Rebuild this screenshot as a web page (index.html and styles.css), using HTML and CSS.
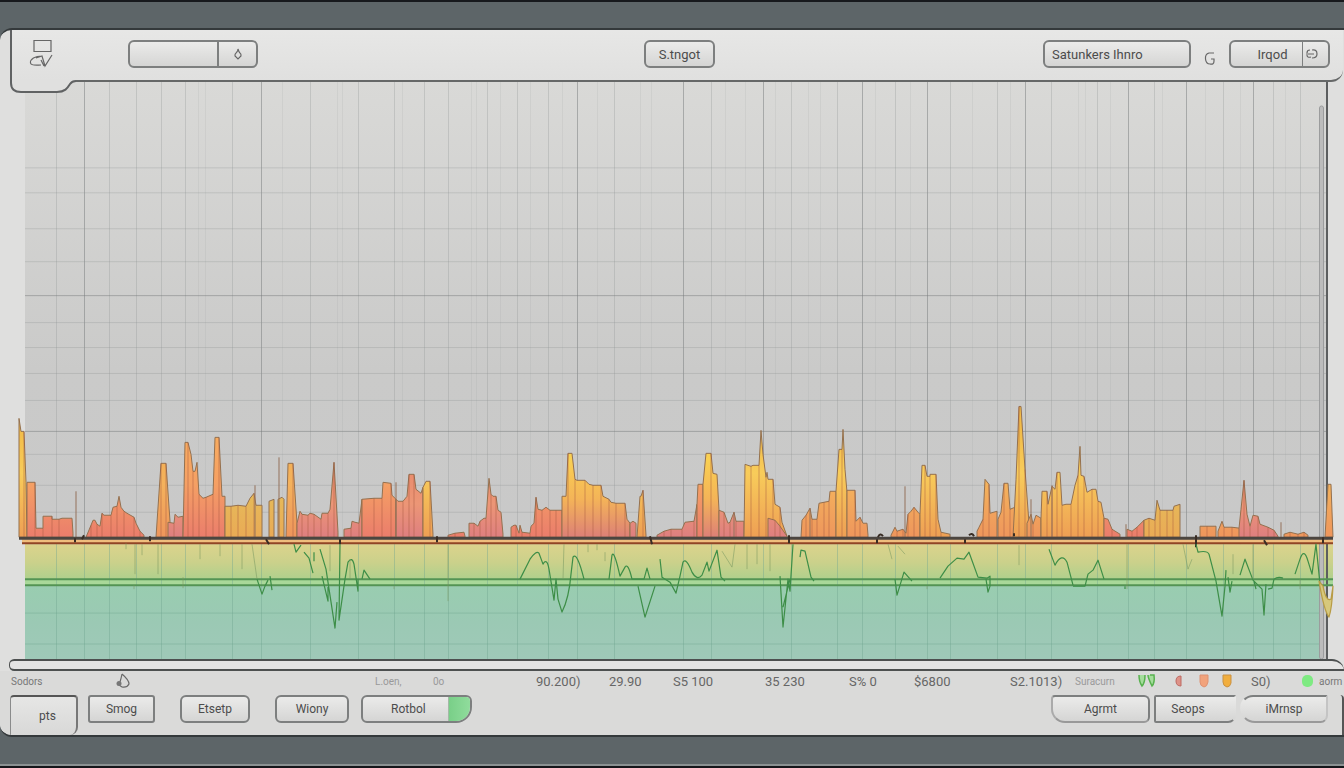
FILE: index.html
```html
<!DOCTYPE html>
<html lang="en">
<head>
    <meta charset="UTF-8">
    <title>Signal Monitor</title>
    <link rel="stylesheet" href="styles.css">
</head>
<body>
<div class="window">
    <header class="toolbar">
        <svg class="toolbar-tab" width="66" height="66" viewBox="0 0 66 66">
            <path class="tab-fill" d="M1 49V54Q1 62 11 62H47C56 62 58 57 60 54Q62 51 66 51V49Z"/>
            <path class="tab-line" d="M1 0V53Q1 62 11 62H47C56 62 58 57 60 54Q62 51 66 51"/>
        </svg>
        <div class="toolbar-left">
            <svg class="logo" width="26" height="32" viewBox="0 0 26 32">
                <path d="M5 2.500H22V13.500H5Z"/>
                <path d="M13 18C6 18 1 21 1.500 25Q2 28 12 27M7 20L13 18L16 28L23 17M12 22L15 28M4 27H12"/>
            </svg>
            <div class="split search">
                <input type="text" aria-label="Search">
                <button aria-label="Marker">
                    <svg width="10" height="12" viewBox="0 0 10 12"><path d="M5 1Q5 3 3.500 4.500Q1.500 6 2 8Q3 9 5 11Q7 9 8 8Q8.500 6 6.500 4.500Q5.500 3 5 1Z"/></svg>
                </button>
            </div>
        </div>
        <button class="box center-button">S.tngot</button>
        <div class="toolbar-right">
            <select class="box source" aria-label="Source">
                <option>Satunkers Ihnro</option>
            </select>
            <button class="icon-button" aria-label="Reload">
                <svg width="12" height="14" viewBox="0 0 12 14"><path d="M10 1H5Q1 2 1.500 7Q2 12 6 12Q10 13 10 9V7H7"/></svg>
            </button>
            <div class="split export">
                <button>Irqod</button>
                <button aria-label="More">
                    <svg width="14" height="10" viewBox="0 0 14 10"><path d="M5 1Q2 1 2 4M1 5H9M2 6Q2 9 6 8M7 1Q12 0 12 5Q12 9 7 9"/></svg>
                </button>
            </div>
        </div>
    </header>

    <svg class="chart" viewBox="0 82 1344 578" preserveAspectRatio="none" role="img" aria-label="Signal chart">
        <defs>
            <linearGradient id="plot" x1="0" y1="0" x2="0" y2="1"><stop offset="0" stop-color="#d9d9d7"/><stop offset="0.5" stop-color="#cacac9"/><stop offset="1" stop-color="#c8c8c8"/></linearGradient>
            <linearGradient id="gold" gradientUnits="userSpaceOnUse" x1="0" y1="430" x2="0" y2="539"><stop offset="0" stop-color="#f2bc48"/><stop offset="0.4" stop-color="#f8cc5a"/><stop offset="1" stop-color="#ee9e54"/></linearGradient>
            <linearGradient id="amber" gradientUnits="userSpaceOnUse" x1="0" y1="430" x2="0" y2="539"><stop offset="0" stop-color="#f4ae4e"/><stop offset="0.5" stop-color="#f4b25c"/><stop offset="1" stop-color="#ee955c"/></linearGradient>
            <linearGradient id="coral" gradientUnits="userSpaceOnUse" x1="0" y1="430" x2="0" y2="539"><stop offset="0" stop-color="#f9ae5e"/><stop offset="0.5" stop-color="#f5a064"/><stop offset="1" stop-color="#ea7c6c"/></linearGradient>
            <linearGradient id="rose" gradientUnits="userSpaceOnUse" x1="0" y1="470" x2="0" y2="539"><stop offset="0" stop-color="#ea8c6c"/><stop offset="0.5" stop-color="#ec9676"/><stop offset="1" stop-color="#de7e80"/></linearGradient>
            <linearGradient id="sunset" gradientUnits="userSpaceOnUse" x1="0" y1="460" x2="0" y2="539"><stop offset="0" stop-color="#fad052"/><stop offset="0.5" stop-color="#f4b458"/><stop offset="1" stop-color="#dc7e78"/></linearGradient>
            <linearGradient id="straw" gradientUnits="userSpaceOnUse" x1="0" y1="490" x2="0" y2="539"><stop offset="0" stop-color="#e5bc5a"/><stop offset="1" stop-color="#eaaa55"/></linearGradient>
            <linearGradient id="lime" x1="0" y1="0" x2="0" y2="1"><stop offset="0" stop-color="#dcd38c"/><stop offset="0.5" stop-color="#cbd18b"/><stop offset="1" stop-color="#aed08d"/></linearGradient>
            <linearGradient id="teal" x1="0" y1="0" x2="0" y2="1"><stop offset="0" stop-color="#99cdb0"/><stop offset="0.5" stop-color="#9bc9b4"/><stop offset="1" stop-color="#9fc9b8"/></linearGradient>
        </defs>
        <rect x="25" y="82" width="1301" height="578" fill="url(#plot)"/>
        <rect x="25" y="545" width="1308" height="36" fill="url(#lime)"/>
        <rect x="25" y="580" width="1308" height="7" fill="#a9d899"/>
        <rect x="25" y="587" width="1295" height="73" fill="url(#teal)"/>
        <g id="grid"></g>
        <rect class="scroll-thumb" x="1319.500" y="106" width="4" height="554" rx="2"/>
        <path class="edge" d="M1327 82V660"/>
        <g id="bars"></g>
        <rect x="22" y="540" width="1311" height="4" fill="#f0bd7d"/>
        <path class="axis" d="M19 539H1333"/>
        <path class="axis-red" d="M22 544H1333"/>
        <path class="ticks" d="M75 539V543M82 540L84 536M150 537V542M266 540L269 545M340 540V545M437 537V543M650 537L652 545M789 536V544M877 540V544M965 540V544M1196 536V548M1264 541L1267 546M1323 538V544M878 538Q880 533 883 537M969 536Q972 533 974 537M1014 537V534"/>
        <path class="band-line" d="M25 580H1333M25 586H1333"/>
        <g id="traces"></g>
    </svg>

    <div class="slider-track"></div>

    <footer class="panel">
        <div class="readout">
            <span class="small">Sodors</span>
            <svg width="16" height="16" viewBox="0 0 16 16"><path d="M7 1Q6 6 5 9M7 1Q14 7 14 11Q12 15 7 14L4 12" fill="none" stroke="#6a6a6a" stroke-width="1.200"/><circle cx="4" cy="10.500" r="2.500" fill="#777"/></svg>
            <span class="small faint">L.oen,</span>
            <span class="small faint">0o</span>
            <span>90.200)</span>
            <span>29.90</span>
            <span>S5 100</span>
            <span>35 230</span>
            <span>S% 0</span>
            <span>$6800</span>
            <span>S2.1013)</span>
            <span class="small faint">Suracurn</span>
            <svg width="18" height="14" viewBox="0 0 18 14"><path d="M1 1Q1 8 4 12Q7 9 7 1M10 1Q10 4 14 12Q17 9 16 1L12 1" fill="#a5dd9c" stroke="#58b14f" stroke-width="1.500"/></svg>
            <svg width="8" height="14" viewBox="0 0 8 14"><path d="M6 2V12Q1 12 1 7Q1 2 6 2Z" fill="#de9288" stroke="#bd6a62"/></svg>
            <svg width="10" height="14" viewBox="0 0 10 14"><path d="M1 1H9V8Q8 13 5 13Q1 12 1 8Z" fill="#f2a37c" stroke="#de9273"/></svg>
            <svg width="10" height="14" viewBox="0 0 10 14"><path d="M1 1H9V9Q8 13 5 13Q1 12 1 8Z" fill="#f1ae3e" stroke="#c99142"/></svg>
            <span>S0)</span>
            <svg width="13" height="14" viewBox="0 0 13 14"><rect x="1" y="1" width="11" height="12" rx="5" fill="#7eea82"/></svg>
            <span class="small">aorm</span>
        </div>
        <div class="actions">
            <div class="group tabs">
                <button class="tab">pts</button>
                <button class="box square">Smog</button>
            </div>
            <div class="group modes">
                <button class="box">Etsetp</button>
                <button class="box">Wiony</button>
            </div>
            <button class="box record">Rotbol<span class="record-light"></span></button>
            <div class="group ends">
                <button class="box format">Agrmt</button>
                <button class="box stops">Seops</button>
                <button class="box merge">iMrnsp</button>
            </div>
        </div>
    </footer>
</div>
<script src="chart.js"></script>
</body>
</html>
```
FILE: styles.css
```css
* {
    box-sizing: border-box;
}
body {
    margin: 0;
    height: 100vh;
    min-height: 480px;
    padding: 26px 0 29px;
    display: flex;
    flex-direction: column;
    overflow: hidden;
    background: #5d6568;
    border-top: 2px solid #17191d;
    border-bottom: 2px solid #15161a;
    box-shadow: inset 0 -2px 0 #8b9192;
    color: #4c4c4c;
    font-family: Roboto, "Liberation Sans", sans-serif;
    font-size: 13px;
}
button, input, select {
    font: inherit;
    color: inherit;
    margin: 0;
    padding: 0;
}
svg {
    display: block;
}
.window {
    flex: 1;
    min-height: 0;
    display: flex;
    flex-direction: column;
    background: #dfdfde;
    border-top: 2px solid #34393b;
    border-bottom: 2px solid #34393b;
    border-radius: 12px 0 0 12px;
}

/* toolbar */
.toolbar {
    position: relative;
    display: grid;
    grid-template-columns: 1fr auto 1fr;
    align-items: center;
    height: 52px;
    margin: 0 1px 0 10px;
    padding: 0 13px 2px 19px;
    background: linear-gradient(#e7e7e6, #e0e0df);
    border-bottom: 2px solid #666868;
    border-bottom-right-radius: 12px;
}
.toolbar-tab {
    position: absolute;
    left: 0;
    top: 0;
}
.tab-fill {
    fill: #e0e0df;
}
.tab-line {
    fill: none;
    stroke: #606263;
    stroke-width: 2;
}
.toolbar-left, .toolbar-right {
    position: relative;
    display: flex;
    align-items: center;
}
.toolbar-left {
    gap: 73px;
}
.toolbar-right {
    justify-content: flex-end;
    gap: 13px;
}
.logo path, .split path, .icon-button path {
    fill: none;
    stroke: #666;
    stroke-width: 1.2;
}
.box, .split {
    height: 28px;
    background: linear-gradient(#ebebea, #d5d5d4);
    border: 2px solid #7d7f7f;
    border-radius: 6px;
}
.split {
    display: flex;
    overflow: hidden;
}
.split input, .split button, .icon-button {
    border: 0;
    background: none;
}
.split button {
    display: flex;
    align-items: center;
    justify-content: center;
}
.split > :last-child {
    border-left: 2px solid #7d7f7f;
}
.search {
    width: 130px;
}
.search input {
    flex: 1;
    min-width: 0;
    padding: 0 8px;
}
.search button {
    width: 39px;
}
.center-button {
    width: 71px;
}
.source {
    width: 148px;
    padding: 0 7px;
    appearance: none;
}
.export {
    width: 101px;
}
.export button {
    width: 26px;
}
.export button:first-child {
    flex: 1;
    padding-left: 12px;
}
.export > :last-child {
    border-left-width: 1px;
    padding-right: 8px;
}
.icon-button {
    padding-top: 10px;
}

/* chart */
.chart {
    flex: 1;
    width: 100%;
    min-height: 0;
}
.grid-line {
    stroke: #8f9494;
    stroke-width: 1;
    opacity: 0.3;
}
.grid-line.major {
    stroke: #777b7c;
    opacity: 0.5;
}
.grid-line.minor {
    opacity: 0.12;
}
.grid-line.low {
    stroke: #6fa590;
    opacity: 0.4;
}
.bar-shape {
    stroke: #94704f;
    stroke-width: 1;
    stroke-linejoin: round;
}
.bar-split {
    stroke: #a3553f;
    stroke-width: 1;
    opacity: 0.45;
}
.spike {
    fill: none;
    stroke: #94715b;
    stroke-width: 1;
}
.axis {
    stroke: #4b4540;
    stroke-width: 3;
}
.axis-red {
    stroke: #914526;
    stroke-width: 2;
}
.ticks {
    fill: none;
    stroke: #392d25;
    stroke-width: 2;
}
.band-line {
    stroke: #549454;
    stroke-width: 2;
}
.trace {
    fill: none;
    stroke: #3d8e47;
    stroke-width: 1.2;
    stroke-linejoin: round;
}
.trace.soft {
    stroke: #799962;
    stroke-width: 1;
    opacity: 0.55;
}
.trace.tail {
    fill: #d7c87c;
    stroke: #b89c45;
}
.edge {
    stroke: #5c5e5f;
    stroke-width: 2;
}
.scroll-thumb {
    fill: #bcbcbc;
    stroke: #9b9c9d;
}
.slider-track {
    height: 12px;
    margin-left: 9px;
    background: #e4e4e4;
    border: solid #4d5050;
    border-width: 2px 0 2px 1px;
    border-radius: 6px 14px 0 6px;
}

/* bottom panel */
.panel {
    height: 64px;
    background: #dadad9;
    border-radius: 0 0 0 12px;
    overflow: hidden;
}
.readout {
    display: grid;
    grid-template-columns:
        minmax(0, 104fr) minmax(0, 260fr) minmax(0, 58fr) minmax(0, 103fr)
        minmax(0, 73fr) minmax(0, 64fr) minmax(0, 92fr) minmax(0, 84fr)
        minmax(0, 65fr) minmax(0, 96fr) minmax(0, 65fr) minmax(0, 63fr)
        minmax(0, 37fr) minmax(0, 24fr) minmax(0, 23fr) minmax(0, 29fr)
        minmax(0, 50fr) minmax(0, 18fr) minmax(0, 25fr);
    align-items: center;
    height: 24px;
    padding: 0 0 4px 11px;
    white-space: nowrap;
    color: #666;
}
.readout .small {
    font-size: 10px;
    color: #777;
}
.readout .faint {
    color: #999;
}
.actions {
    display: flex;
    align-items: flex-start;
    padding-left: 10px;
    font-size: 12px;
}
.group {
    display: flex;
}
.tabs {
    gap: 10px;
}
.modes {
    gap: 25px;
    margin: 0 12px 0 25px;
}
.actions .box {
    width: 70px;
}
.actions .square {
    width: 67px;
    border-radius: 3px;
}
.tab {
    width: 68px;
    height: 40px;
    background: linear-gradient(#e6e6e5, #d8d8d7);
    border: 1px solid #8a8b8b;
    border-top: 2px solid #555;
    border-right: 2px solid #777;
    border-bottom: 0;
    border-radius: 4px 4px 8px 0;
    padding-left: 8px;
}
.modes .box:last-child {
    width: 74px;
}
.actions .record {
    display: flex;
    align-items: center;
    justify-content: space-between;
    width: 111px;
    padding-left: 28px;
    border-radius: 6px 6px 16px 6px;
    overflow: hidden;
}
.record-light {
    width: 22px;
    height: 24px;
    background: linear-gradient(90deg, #79cf88, #90dc9c);
    border-left: 1px solid #a5b8a7;
}
.ends {
    flex: 1;
    justify-content: flex-end;
    gap: 4px;
    height: 40px;
    padding-right: 14px;
    border-right: 2px solid #555;
    border-top-right-radius: 4px;
}
.actions .format {
    width: 99px;
    border-radius: 4px 6px 6px 14px;
    border-left-color: #aaa;
    border-bottom-color: #999;
}
.actions .stops {
    width: 82px;
    padding-right: 14px;
    border-radius: 2px 0 8px 2px;
    border-right-color: transparent;
}
.actions .merge {
    width: 88px;
    border-radius: 14px 2px 8px 16px;
    border-left-color: transparent;
    border-right-color: #c4c4c4;
    border-bottom-color: #999;
}
```
FILE: chart.js
```js
const SVG_NS = 'http://www.w3.org/2000/svg';
const BASE = 538;

function add(parent, tag, attrs) {
    const el = document.createElementNS(SVG_NS, tag);
    for (const key in attrs) {
        el.setAttribute(key, attrs[key]);
    }
    document.getElementById(parent).appendChild(el);
}

// grid
const columns = [56, 109, 136, 161, 185, 232, 310, 358, 394, 424, 448, 487, 517, 548, 614, 711, 791, 837, 895, 950, 997, 1051, 1097, 1154, 1223, 1273, 1300];
const majorColumns = [84, 261, 577, 683, 763, 862, 927, 1025, 1128, 1186, 1253];
const minorColumns = [198, 205, 282, 337, 342, 402, 471, 476, 500, 530, 562, 597, 640, 651, 725, 745, 775, 808, 820, 875, 910, 972, 1010, 1078, 1085, 1110, 1162, 1205, 1240, 1285];
const rows = [168, 193, 229, 262, 323, 348, 374, 401, 455, 486, 513];
const majorRows = [296, 432];
const lowRows = [614, 645];

columns.forEach(x => add('grid', 'path', {d: `M${x}.5 82V545`, class: 'grid-line'}));
majorColumns.forEach(x => add('grid', 'path', {d: `M${x}.5 82V545`, class: 'grid-line major'}));
minorColumns.forEach(x => add('grid', 'path', {d: `M${x}.5 82V545`, class: 'grid-line minor'}));
columns.concat(majorColumns).forEach(x => add('grid', 'path', {d: `M${x}.5 545V660`, class: 'grid-line low'}));
rows.forEach(y => add('grid', 'path', {d: `M25 ${y}H1326`, class: 'grid-line'}));
majorRows.forEach(y => add('grid', 'path', {d: `M25 ${y}H1326`, class: 'grid-line major'}));
lowRows.forEach(y => add('grid', 'path', {d: `M25 ${y}H1320`, class: 'grid-line low'}));

// bar outlines, one run per colour
const runs = [
    ['gold', '19,419 21,432 24,432 26,483 27,538'],
    ['coral', '27,483 35,483 36,529 43,529 43,517 52,517 52,520 59,520 62,519 72,519 73,534'],
    ['coral', '86,538 91,526 93,521 95,521 97,525 100,527 102,514 104,516 111,516 113,508 117,507 119,497 121,508 124,512 127,514 134,518 136,524 140,532 144,536'],
    ['amber', '156,538 161,464 166,464 170,522 171,538'],
    ['rose', '168,523 174,524 175,515 178,518 183,517'],
    ['coral', '183,538 185,443 188,443 191,455 193,472 195,472 197,463 199,495 203,499 206,498 213,495 215,438 219,438 222,497 225,497'],
    ['straw', '225,507 231,507 238,506 246,507 250,499 254,494 256,506 262,506'],
    ['straw', '269,502 274,500'],
    ['straw', '278,500 282,498 284,500'],
    ['amber', '286,538 288,464 293,464 297,524'],
    ['rose', '297,524 300,512 302,515 308,516 310,514 314,515 321,520 322,514 328,514 330,510 334,463 338,533'],
    ['rose', '344,530 351,529 352,522 355,523 359,524 362,500'],
    ['coral', '362,500 374,499 382,499 383,483 391,484 392,496 396,500'],
    ['rose', '396,500 398,502 403,502 407,497 409,475 414,475 416,490 421,494 423,488'],
    ['gold', '423,488 426,482 430,482 433,535'],
    ['coral', '448,536 455,534 464,533 465,537'],
    ['rose', '469,524 474,524 478,527 480,522 484,519 486,519 489,479 491,495 493,497 496,497 498,511 501,513 503,535'],
    ['coral', '511,528 514,526 516,526 519,534 520,526 522,533 530,534 531,527 534,524 536,498 538,510 542,511 546,508 550,511 556,511 562,511'],
    ['sunset', '562,497 566,497 568,454 572,454 575,480 577,481 585,481 589,485 593,486 601,486 603,497 609,500 611,503 616,504 625,504 627,520 630,524'],
    ['rose', '630,524 633,522 636,524'],
    ['gold', '637,538 640,497 641,497 643,491 646,536'],
    ['rose', '657,536 664,532 671,530 682,530 685,523 694,522 697,505'],
    ['coral', '697,505 698,485 703,485'],
    ['sunset', '703,485 706,454 711,454 713,474 717,475 719,511'],
    ['rose', '719,511 724,513 728,524 730,523 734,513 736,522 744,522'],
    ['gold', '744,538 745,465 751,467 753,466 759,466 761,431 763,455 766,478 767,473 768,480 773,480 775,505 780,508 782,523 787,537'],
    ['rose', '768,519 775,521 780,527 787,537'],
    ['amber', '801,538 802,521 806,516 810,509 812,520 817,520 819,504 824,503 829,502 830,492 836,492'],
    ['gold', '836,492 839,450 842,450 843,430 845,470 847,493'],
    ['amber', '847,491 855,491 856,522 860,518 863,524 867,524 868,536'],
    ['amber', '891,536 895,528 897,532 903,530 906,534 908,515 911,512 914,508 918,513 920,515'],
    ['gold', '920,515 922,466 925,466 927,477 930,477 930,475 936,475 938,520 941,533 950,535'],
    ['amber', '977,532 979,528 983,520 985,480 989,485 990,514 997,512'],
    ['amber', '998,520 1001,513 1004,484 1008,484 1010,510 1015,508'],
    ['gold', '1013,538 1016,480 1019,407 1021,407 1025,470 1029,524'],
    ['amber', '1027,524 1031,515 1033,525 1036,516 1041,519'],
    ['gold', '1041,519 1042,492 1047,492 1048,505 1052,487 1055,490 1057,473 1060,473 1062,506 1066,505 1071,505 1075,486 1078,476 1080,447 1081,476 1084,477 1087,493 1092,490 1096,490 1098,502 1101,503 1104,519'],
    ['coral', '1104,519 1108,520 1112,530 1120,535'],
    ['coral', '1127,530 1132,532 1137,528 1144,521'],
    ['straw', '1144,521 1149,519 1155,521 1157,501 1160,511 1167,511 1173,511 1174,507 1180,505'],
    ['amber', '1200,527 1207,527 1216,527'],
    ['amber', '1218,532 1222,522 1224,528 1232,528 1240,529'],
    ['rose', '1239,529 1241,510 1244,481 1247,515 1250,527 1253,516 1258,517 1260,525 1268,528 1274,531 1278,537'],
    ['amber', '1284,535 1290,533 1298,535 1304,533 1308,536'],
    ['amber', '1325,538 1328,485 1331,485 1333,538']
];

runs.forEach(([fill, text]) => {
    const points = text.split(' ').map(p => p.split(',').map(Number));
    const first = points[0][0];
    const last = points[points.length - 1][0];
    add('bars', 'path', {
        d: `M${first} ${BASE}L${points.join('L')}L${last} ${BASE}Z`,
        fill: `url(#${fill})`,
        class: 'bar-shape'
    });
    // separators between neighbouring bars
    let prev = first;
    points.forEach(([x, y]) => {
        if (x - prev >= 5 && last - x > 2) {
            add('bars', 'path', {d: `M${x} ${y}V${BASE}`, class: 'bar-split'});
            prev = x;
        }
    });
});

const spikes = [[76, 492], [255, 486], [279, 458], [396, 483], [905, 487], [1052, 486], [1031, 500], [1126, 525], [1281, 523], [734, 513], [810, 509]];
spikes.forEach(([x, y]) => add('bars', 'path', {d: `M${x} ${BASE}V${y}`, class: 'spike'}));

// traces below the axis
const traces = [
    'M257 580L262 595L265 587L268 581M270 577L272 591',
    'M294 545L296 553L301 546M304 553L309 559L313 574M314 562V553',
    'M320 550L326 570L335 629L337 603M322 577L328 602V588M340 545L339 621L345 580L348 563Q352 557 354 565L358 592V580M362 580L364 571L370 580',
    'M520 580L530 560Q536 551 539 554L543 565Q547 558 549 570L554 601L556 580L558 600L562 613Q569 599 571 575L573 558Q577 552 584 580',
    'M609 580L612 556Q614 550 620 577L625 568Q628 563 632 580H644L647 569L650 580M638 587L645 618L655 587M660 560L662 578L670 583L676 594L680 577L683 563Q686 558 692 573Q697 582 702 576L707 563L709 572L717 551L721 578L725 582',
    'M780 577L783 628L788 580L790 592L793 545M783 608L790 580M800 558L801 551L805 552L811 578L814 582',
    'M895 580L897 596L904 573L912 582M940 579L948 567L957 559L964 560L969 553L978 578L987 579L990 577V587L988 593L986 580',
    'M1049 550L1055 566Q1062 553 1067 563L1073 586M1073 587H1085L1088 575L1093 571L1098 561L1104 580M1125 587V590',
    'M1196 545L1198 553Q1207 551 1209 555L1216 582L1222 617L1225 587L1226 571M1228 578L1230 593L1232 582M1240 576L1245 560L1253 581L1262 590L1264 616L1266 585M1268 590L1272 589L1274 580Q1278 577 1283 579M1254 582L1256 590',
    'M1295 575L1300 560Q1304 548 1308 562L1312 575L1316 545L1320 585'
];
const softTraces = [
    'M126 544V550M135 545V575M142 545V556M158 545V575M200 545V560M220 545V557M242 545V570M252 545L257 580M448 545V602M563 580L564 545M588 545V553M597 545V551M605 553V562M330 546V572M350 560V580',
    'M722 552L732 568L735 545M747 545V570M757 545V565M770 545V572M888 545L892 560M898 547L905 555M1019 546V566M1127 545V590M1183 545L1188 570L1192 560M1233 555V575M1253 545V580M1300 580V590M134 586V590M183 578V589M394 587V590M927 587V590'
];
traces.forEach(d => add('traces', 'path', {d: d, class: 'trace'}));
softTraces.forEach(d => add('traces', 'path', {d: d, class: 'trace soft'}));
add('traces', 'path', {d: 'M1319 582Q1324 612 1329 618Q1332 609 1333 587L1331 600Q1326 603 1323 587Z', class: 'trace tail'});
```
